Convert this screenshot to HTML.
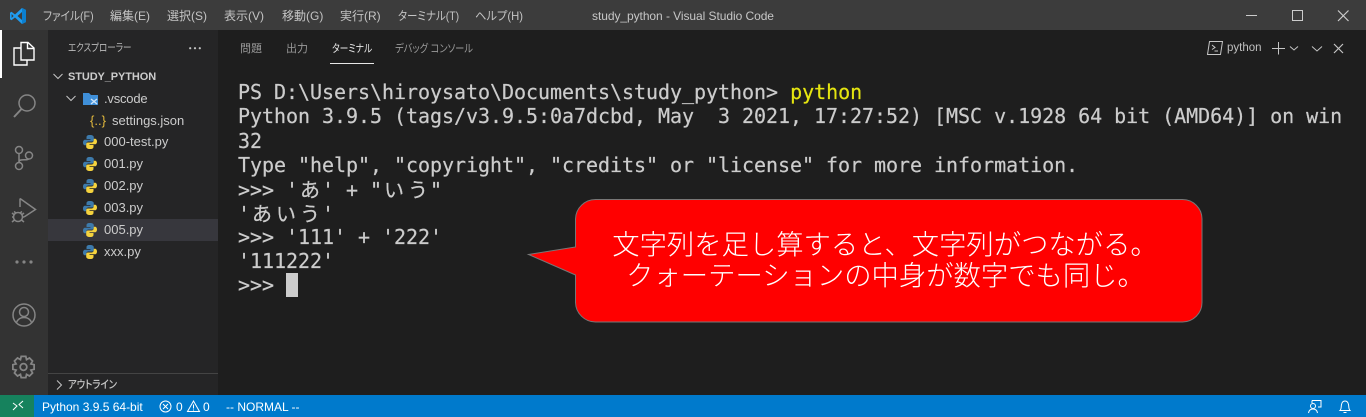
<!DOCTYPE html>
<html lang="ja"><head><meta charset="utf-8"><title>study_python - Visual Studio Code</title>
<style>
*{box-sizing:border-box}
html,body{margin:0;padding:0;width:1366px;height:417px;overflow:hidden;background:#1e1e1e}
body{position:relative;font-family:"Liberation Sans","Noto Sans CJK JP",sans-serif}
.a{position:absolute;white-space:pre;line-height:1;font-feature-settings:"palt";transform-origin:0 0}
.bar{position:absolute}
.m{top:9px;font-size:12px;line-height:15px;color:#c4c4c4;white-space:pre;position:absolute;font-feature-settings:"palt";transform-origin:0 0}
.f{position:absolute;left:104px;font-size:13px;line-height:22px;color:#cccccc;white-space:pre;margin-top:1px}
.t{position:absolute;left:238px;font-family:"DejaVu Sans Mono","Noto Sans CJK JP",monospace;font-size:20px;line-height:24px;color:#cccccc;white-space:pre;letter-spacing:-0.04px;-webkit-text-stroke:.2px}
.j{display:inline-block;width:24px;text-align:center;font-family:"Noto Sans CJK JP",sans-serif}
.tab{position:absolute;top:42px;font-size:11px;line-height:14px;color:#9a9a9a;white-space:pre;font-feature-settings:"palt";transform-origin:0 0}
svg{position:absolute;overflow:visible}
.c{position:absolute;text-align:center;font-family:"Noto Sans CJK JP",sans-serif;font-weight:300;font-size:27.33px;line-height:31px;color:#fff;white-space:pre}
.s{position:absolute;top:400px;font-size:12px;line-height:15px;color:#fff;white-space:pre}
</style></head><body>
<div class="bar" style="left:0;top:0;width:1366px;height:30px;background:#3c3c3c"></div>
<div class="bar" style="left:0;top:30px;width:48px;height:365px;background:#333333"></div>
<div class="bar" style="left:0;top:30px;width:2px;height:48px;background:#fff"></div>
<div class="bar" style="left:48px;top:30px;width:170px;height:365px;background:#252526"></div>
<div class="bar" style="left:48px;top:219px;width:170px;height:22px;background:#37373d"></div>
<div class="bar" style="left:48px;top:373px;width:170px;height:1px;background:#444"></div>
<div class="bar" style="left:0;top:395px;width:1366px;height:22px;background:#007acc"></div>
<div class="bar" style="left:0;top:395px;width:34px;height:22px;background:#16825d"></div>

<!-- VS Code logo -->
<svg style="left:9px;top:7px" width="18" height="18" viewBox="0 0 18 18"><path d="M13 1 L17 3 V15 L13 17 L6 10.5 L2.5 13.2 L1 12.2 V5.8 L2.5 4.8 L6 7.5Z M13 5 L8.5 9 L13 13Z M2.6 7 V11 L4.6 9Z" fill="#1f9cf0" fill-rule="evenodd"/><path d="M13 1 L17 3 V15 L13 17Z" fill="#0b7fcf"/></svg>

<div class="m" style="left:43px;transform:scaleX(.89)">ファイル(F)</div>
<div class="m" style="left:110px">編集(E)</div>
<div class="m" style="left:167px">選択(S)</div>
<div class="m" style="left:224px">表示(V)</div>
<div class="m" style="left:282px">移動(G)</div>
<div class="m" style="left:340px">実行(R)</div>
<div class="m" style="left:398px;transform:scaleX(.87)">ターミナル(T)</div>
<div class="m" style="left:475px;transform:scaleX(.94)">ヘルプ(H)</div>
<div class="m" style="left:592px;color:#c6c6c6;letter-spacing:-0.06px">study_python - Visual Studio Code</div>

<svg style="left:1245px;top:10px" width="112" height="12" fill="none" stroke="#cccccc" stroke-width="1">
<path d="M1 5.500H12"/><rect x="47.500" y="0.500" width="10" height="10"/><path d="M93 0.500 L103.500 11 M103.500 0.500 L93 11" stroke-width="1.2"/></svg>

<!-- activity icons -->
<svg style="left:12px;top:41px" width="24" height="26" fill="none" stroke="#fff" stroke-width="1.4"><path d="M9 1.500H16L22 7V19H9Z"/><path d="M15.500 1.500V7.500H22"/><path d="M9 7H2V24H15V19"/></svg>
<svg style="left:12px;top:93px" width="25" height="26" fill="none" stroke="#858585" stroke-width="1.5"><circle cx="15" cy="10" r="8"/><path d="M9.500 16 L2 24" stroke-width="2"/></svg>
<svg style="left:13px;top:145px" width="24" height="26" fill="none" stroke="#858585" stroke-width="1.5"><circle cx="6" cy="5" r="3.500"/><circle cx="6" cy="21" r="3.500"/><circle cx="16" cy="10.500" r="3.500"/><path d="M6 8.500V17.500M6 17C6 13 14.500 16 15.500 14"/></svg>
<svg style="left:11px;top:197px" width="26" height="28" fill="none" stroke="#858585" stroke-width="1.5"><path d="M9 1.500 L24.500 12.500 L13 20"/><path d="M9 1.500V10"/><circle cx="7" cy="20" r="4.500"/><path d="M1 16L3.500 18M13 16L10.500 18M1 20H2.500M13 20H11.500M1 25L3.500 23M13 25L10.500 23M3 14.500L5 16M11 14.500L9 16"/></svg>
<svg style="left:15px;top:260px" width="18" height="4" fill="#858585"><circle cx="2" cy="2" r="1.600"/><circle cx="9" cy="2" r="1.600"/><circle cx="16" cy="2" r="1.600"/></svg>
<svg style="left:12px;top:303px" width="24" height="24" fill="none" stroke="#858585" stroke-width="1.5"><circle cx="12" cy="12" r="11"/><circle cx="12" cy="9" r="4.500"/><path d="M4.500 19.500C6 15.500 9 14.500 12 14.500S18 15.500 19.500 19.500"/></svg>
<svg style="left:11px;top:355px" width="25" height="24" viewBox="0 0 26 26" fill="none" stroke="#858585" stroke-width="1.900"><path d="M10.500 1.500H15.500L16.300 5L19.500 3.200L22.800 6.500L21 9.700L24.500 10.500V15.500L21 16.300L22.800 19.500L19.500 22.800L16.300 21L15.500 24.500H10.500L9.700 21L6.500 22.800L3.200 19.500L5 16.300L1.500 15.500V10.500L5 9.700L3.200 6.500L6.500 3.200L9.700 5Z"/><circle cx="13" cy="13" r="3.600"/></svg>

<!-- sidebar -->
<div class="a" style="left:68px;top:42px;font-size:10.500px;line-height:13px;color:#bbbbbb;transform:scaleX(.81)">エクスプローラー</div>
<svg style="left:189px;top:47px" width="12" height="3" fill="#c5c5c5"><circle cx="1.200" cy="1.200" r="1.100"/><circle cx="6" cy="1.200" r="1.100"/><circle cx="10.800" cy="1.200" r="1.100"/></svg>
<svg style="left:53px;top:73px" width="10" height="7" fill="none" stroke="#c5c5c5"><path d="M0.500 1L5 5.500L9.500 1"/></svg>
<div class="a" style="left:68px;top:70px;font-size:11px;line-height:14px;font-weight:bold;color:#cccccc;letter-spacing:-0.1px">STUDY_PYTHON</div>
<svg style="left:66px;top:95px" width="10" height="7" fill="none" stroke="#c5c5c5"><path d="M0.500 1L5 5.500L9.500 1"/></svg>
<svg style="left:83px;top:92px" width="16" height="14"><path d="M0 1H6L8 3H15V13H0Z" fill="#3f8fd8"/><path d="M8 7L14 12M14 7L8 12" stroke="#cfe4f7" stroke-width="1.400"/></svg>
<div class="f" style="left:104px;top:87px;letter-spacing:-0.2px">.vscode</div>
<div class="a" style="left:90px;top:113px;font-size:13px;line-height:15px;color:#e2b93d">{..}</div>
<div class="f" style="left:112px;top:109px">settings.json</div>

<svg width="0" height="0" style="left:0;top:0"><defs><g id="py"><path d="M7 0C4 0 3.500 1 3.500 2.500V4H7.500V4.700H2C0.700 4.700 0 6 0 7.500S0.700 10.300 2 10.300H3.300V8.600C3.300 7.400 4.300 6.500 5.400 6.500H9.200C10.200 6.500 10.800 5.800 10.800 4.800V2.400C10.800 1 9.500 0 7 0Z" fill="#3d7aab"/><path d="M7 14C10 14 10.500 13 10.500 11.500V10H6.500V9.300H12C13.300 9.300 14 8 14 6.500S13.300 3.700 12 3.700H10.700V5.400C10.700 6.600 9.700 7.500 8.600 7.500H4.800C3.800 7.500 3.200 8.200 3.200 9.200V11.600C3.200 13 4.500 14 7 14Z" fill="#f5d33e"/></g></defs></svg>
<svg style="left:83px;top:135px" width="14" height="14"><use href="#py"/></svg>
<svg style="left:83px;top:157px" width="14" height="14"><use href="#py"/></svg>
<svg style="left:83px;top:179px" width="14" height="14"><use href="#py"/></svg>
<svg style="left:83px;top:201px" width="14" height="14"><use href="#py"/></svg>
<svg style="left:83px;top:223px" width="14" height="14"><use href="#py"/></svg>
<svg style="left:83px;top:245px" width="14" height="14"><use href="#py"/></svg>
<div class="f" style="top:130px">000-test.py</div>
<div class="f" style="top:152px">001.py</div>
<div class="f" style="top:174px">002.py</div>
<div class="f" style="top:196px">003.py</div>
<div class="f" style="top:218px">005.py</div>
<div class="f" style="top:240px">xxx.py</div>
<svg style="left:56px;top:380px" width="7" height="10" fill="none" stroke="#c5c5c5"><path d="M1 0.500L5.500 5L1 9.500"/></svg>
<div class="a" style="left:68px;top:378px;font-size:11px;line-height:14px;color:#cccccc;-webkit-text-stroke:.2px;transform:scaleX(.85)">アウトライン</div>

<!-- panel tabs -->
<div class="tab" style="left:240px">問題</div>
<div class="tab" style="left:286px">出力</div>
<div class="tab" style="left:332px;color:#e7e7e7;transform:scaleX(.8)">ターミナル</div>
<div class="tab" style="left:395px;transform:scaleX(.84)">デバッグ コンソール</div>
<div class="bar" style="left:330px;top:63px;width:44px;height:1px;background:#e7e7e7"></div>

<svg style="left:1207px;top:41px" width="16" height="14" fill="none" stroke="#c5c5c5"><path d="M2.500 0.500H15.500L13.500 13.500H0.500Z"/><path d="M5 4L8 6.500L5 8.500M7.500 10H11"/></svg>
<div class="a" style="left:1227px;top:41px;font-size:11.500px;line-height:14px;color:#c0c0c0">python</div>
<svg style="left:1272px;top:42px" width="85" height="12" fill="none" stroke="#c5c5c5"><path d="M6.500 0V12.500M0 6.500H13" stroke-width="1"/><path d="M18 4.500L22 8L26 4.500M40 4.500L45 9L50 4.500"/><path d="M62 2L71 11M71 2L62 11" stroke-width="1.200"/></svg>

<!-- terminal -->
<div class="t" style="top:80px">PS D:\Users\hiroysato\Documents\study_python&gt; <span style="color:#e5e510">python</span></div>
<div class="t" style="top:104px">Python 3.9.5 (tags/v3.9.5:0a7dcbd, May  3 2021, 17:27:52) [MSC v.1928 64 bit (AMD64)] on win</div>
<div class="t" style="top:129px">32</div>
<div class="t" style="top:153px">Type "help", "copyright", "credits" or "license" for more information.</div>
<div class="t" style="top:177px">&gt;&gt;&gt; '<span class="j">あ</span>' + "<span class="j">い</span><span class="j">う</span>"</div>
<div class="t" style="top:201px">'<span class="j">あ</span><span class="j">い</span><span class="j">う</span>'</div>
<div class="t" style="top:225px">&gt;&gt;&gt; '111' + '222'</div>
<div class="t" style="top:249px">'111222'</div>
<div class="t" style="top:273px">&gt;&gt;&gt;</div>
<div class="bar" style="left:286px;top:273px;width:12px;height:24px;background:#cccccc"></div>

<!-- callout -->
<svg style="left:0;top:0" width="1366" height="417"><path d="M595.500 199.500H1182.500A19.500 19.500 0 0 1 1202 219V302.500A19.500 19.500 0 0 1 1182.500 322H595.500A20 20 0 0 1 575.500 302.500V275L528.500 254.500L575.500 247V219A20 20 0 0 1 595.500 199.500Z" fill="#ff0000" stroke="#777" stroke-width="1"/></svg>
<div class="c" style="left:575px;width:620px;top:227px">文字列を足し算すると、文字列がつながる。</div>
<div class="c" style="left:575px;width:621px;top:258px">クォーテーションの中身が数字でも同じ。</div>

<!-- status bar -->
<svg style="left:12px;top:400px" width="12" height="11" fill="none" stroke="#fff" stroke-width="1"><path d="M1 10L5 6L1 3M11 1L7 4.500L11 8"/></svg>
<div class="s" style="left:42px">Python 3.9.5 64-bit</div>
<svg style="left:159px;top:400px" width="13" height="13" fill="none" stroke="#fff"><circle cx="6.500" cy="6.500" r="5.500"/><path d="M4 4L9 9M9 4L4 9"/></svg>
<div class="s" style="left:176px">0</div>
<svg style="left:187px;top:400px" width="13" height="12" fill="none" stroke="#fff"><path d="M6.500 1L12.500 11.500H0.500Z"/><path d="M6.500 4.500V8.500M6.500 9.500V10.500"/></svg>
<div class="s" style="left:203px">0</div>
<div class="s" style="left:226px">-- NORMAL --</div>
<svg style="left:1308px;top:400px" width="14" height="14" fill="none" stroke="#fff"><path d="M4 0.500H13V7H10M4 0.500V3"/><circle cx="5" cy="6" r="2.500"/><path d="M0.500 13C1 10 3 9 5 9S9 10 9.500 13"/></svg>
<svg style="left:1339px;top:400px" width="12" height="14" fill="none" stroke="#fff"><path d="M1 10.500C2.500 9 2 7 2.500 4.500C3 2 4.500 1 6 1S9 2 9.500 4.500C10 7 9.500 9 11 10.500Z"/><path d="M4.500 12.500H7.500"/></svg>
</body></html>
